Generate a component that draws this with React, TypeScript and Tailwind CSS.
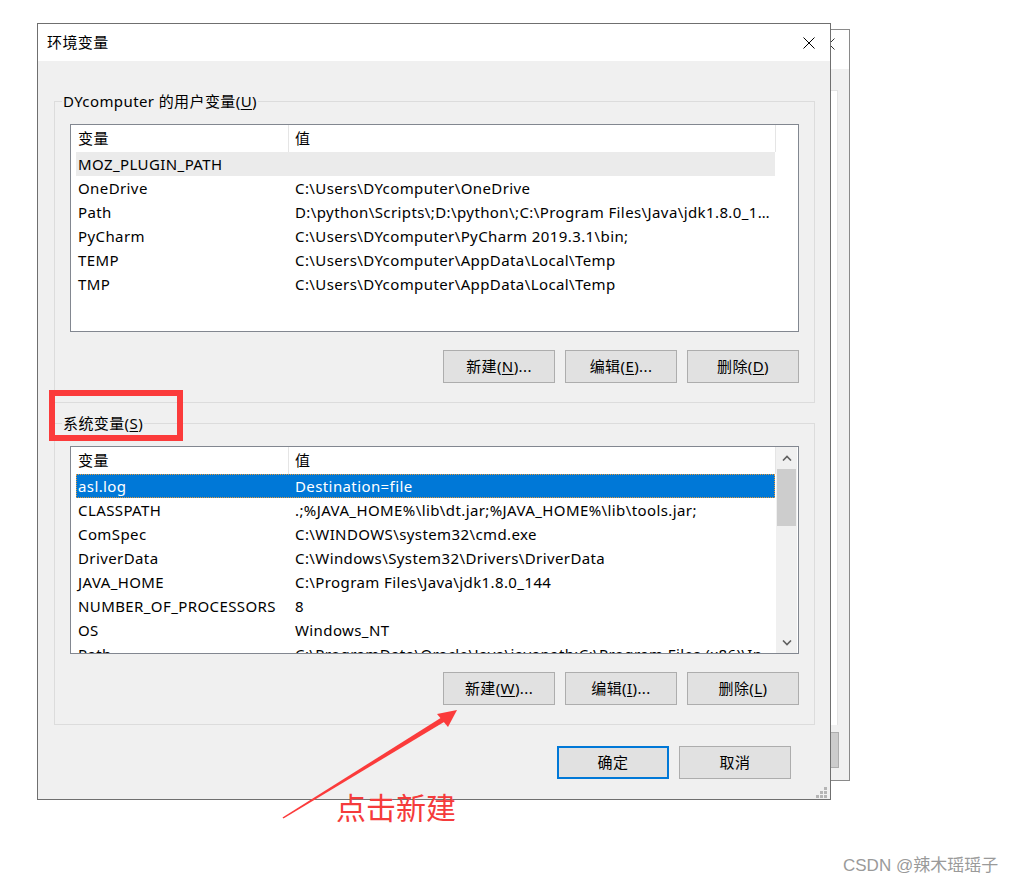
import React from 'react'

const USER_VARS = [
  ['MOZ_PLUGIN_PATH', ''],
  ['OneDrive', 'C:\\Users\\DYcomputer\\OneDrive'],
  ['Path', 'D:\\python\\Scripts\\;D:\\python\\;C:\\Program Files\\Java\\jdk1.8.0_144\\bin;C:\\Program Files\\Java\\jdk1.8.0_144\\jre\\bin;'],
  ['PyCharm', 'C:\\Users\\DYcomputer\\PyCharm 2019.3.1\\bin;'],
  ['TEMP', 'C:\\Users\\DYcomputer\\AppData\\Local\\Temp'],
  ['TMP', 'C:\\Users\\DYcomputer\\AppData\\Local\\Temp'],
]

const SYS_VARS = [
  ['asl.log', 'Destination=file'],
  ['CLASSPATH', '.;%JAVA_HOME%\\lib\\dt.jar;%JAVA_HOME%\\lib\\tools.jar;'],
  ['ComSpec', 'C:\\WINDOWS\\system32\\cmd.exe'],
  ['DriverData', 'C:\\Windows\\System32\\Drivers\\DriverData'],
  ['JAVA_HOME', 'C:\\Program Files\\Java\\jdk1.8.0_144'],
  ['NUMBER_OF_PROCESSORS', '8'],
  ['OS', 'Windows_NT'],
  ['Path', 'C:\\ProgramData\\Oracle\\Java\\javapath;C:\\Program Files (x86)\\Intel\\iCLS Client\\;'],
]

function Chevron({ up }: { up?: boolean }) {
  return (
    <svg width="10" height="6" viewBox="0 0 10 6">
      <path d={up ? 'M1 5.5 L5 1.5 L9 5.5' : 'M1 0.5 L5 4.5 L9 0.5'} fill="none" stroke="#606060" strokeWidth="1.6" />
    </svg>
  )
}

function Btn({ pre, mn, post, primary }: { pre: string; mn?: string; post?: string; primary?: boolean }) {
  return (
    <div
      className={
        primary
          ? 'w-[112px] h-[33px] flex items-center justify-center bg-[#e1e1e1] border-2 border-[#0078d7] text-[15px] text-black'
          : 'w-[112px] h-[33px] flex items-center justify-center bg-[#e1e1e1] border border-[#adadad] text-[15px] text-black'
      }
    >
      <span>
        {pre}
        {mn && <u className="underline-offset-2">{mn}</u>}
        {post}
      </span>
    </div>
  )
}

function ListBox({ rows, selected, inactive, scroll }: { rows: string[][]; selected?: number; inactive?: number; scroll?: boolean }) {
  return (
    <div className="h-[208px] border border-[#828790] bg-white flex overflow-hidden">
      <div className="w-[705px] shrink-0 flex flex-col overflow-hidden">
        <div className="h-[27px] shrink-0 flex text-[15px]">
          <div className="w-[217px] pl-[7px] flex items-center">变量</div>
          <div className="w-px bg-[#e5e5e5]" />
          <div className="w-[486px] pl-[6px] flex items-center">值</div>
          <div className="w-px bg-[#e5e5e5]" />
        </div>
        {rows.map(([name, value], i) => (
          <div
            key={name}
            className={
              i === selected
                ? 'ml-[5px] w-[699px] h-[24px] shrink-0 flex items-center text-[15px] leading-[20px] pb-px bg-[#0078d7] text-white outline-1 outline-dotted outline-[#e59a3a] -outline-offset-1'
                : i === inactive
                ? 'ml-[5px] w-[699px] h-[24px] shrink-0 flex items-center text-[15px] leading-[20px] pb-px bg-[#ebebeb] text-black'
                : 'ml-[5px] w-[699px] h-[24px] shrink-0 flex items-center text-[15px] leading-[20px] pb-px text-black'
            }
          >
            <div className="w-[212px] pl-[2px] whitespace-nowrap overflow-hidden">{name}</div>
            <div className="w-[487px] pl-[7px] whitespace-nowrap overflow-hidden text-ellipsis">{value}</div>
          </div>
        ))}
      </div>
      {scroll && (
        <div className="w-[21px] bg-[#f0f0f0] flex flex-col">
          <div className="h-[22px] flex items-center justify-center">
            <Chevron up />
          </div>
          <div className="h-[57px] mx-px bg-[#cdcdcd]" />
          <div className="flex-1" />
          <div className="h-[21px] flex items-center justify-center">
            <Chevron />
          </div>
        </div>
      )}
    </div>
  )
}

function GroupBox({ label, mn, className, children }: { label: string; mn: string; className?: string; children: React.ReactNode }) {
  return (
    <div className={'relative border border-[#dcdcdc] px-[15px] pt-[22px] pb-[19px] ' + (className || '')}>
      <span className="absolute left-[7px] -top-[11px] px-[1px] bg-[#f0f0f0] text-[15px] leading-[20px] text-black">
        {label}(<u className="underline-offset-2">{mn}</u>)
      </span>
      {children}
    </div>
  )
}

export default function App() {
  return (
    <div className="relative w-[1028px] h-[887px] bg-white overflow-hidden font-['Noto_Sans','Noto_Sans_CJK_SC',sans-serif] tracking-[0.4px] text-black">
      {/* window behind */}
      <div className="absolute left-[780px] top-[29px] w-[70px] h-[752px] border border-[#8a8a8a] bg-[#f0f0f0] flex flex-col">
        <div className="h-[39px] bg-white relative">
          <svg className="absolute left-[42px] top-[8px]" width="12" height="12" viewBox="0 0 12 12">
            <path d="M0.5 0.5 L11.5 11.5 M11.5 0.5 L0.5 11.5" stroke="#333" strokeWidth="1" />
          </svg>
        </div>
        <div className="flex-1 flex flex-col items-end pt-[21px] pr-[11px]">
          <div className="w-[50px] h-[635px] bg-white border-r border-t border-[#e3e3e3]" />
          <div className="mt-[7px] mr-[-1px] w-[50px] h-[36px] bg-[#cccccc] border border-[#adadad]" />
        </div>
      </div>

      {/* main dialog */}
      <div className="absolute left-[37px] top-[23px] w-[794px] h-[777px] border border-[#6f6f6f] bg-[#f0f0f0] flex flex-col">
        <div className="h-[37px] shrink-0 bg-white flex items-center justify-between pl-[9px] pr-[15px]">
          <span className="text-[15px]">环境变量</span>
          <svg width="12" height="12" viewBox="0 0 12 12">
            <path d="M0.5 0.5 L11.5 11.5 M11.5 0.5 L0.5 11.5" stroke="#000" strokeWidth="1" />
          </svg>
        </div>
        <div className="flex-1 pl-[16px] pr-[15px] pt-[40px] flex flex-col">
          <GroupBox label="DYcomputer 的用户变量" mn="U">
            <ListBox rows={USER_VARS} inactive={0} />
            <div className="mt-[18px] flex justify-end gap-[10px]">
              <Btn pre="新建(" mn="N" post=")..." />
              <Btn pre="编辑(" mn="E" post=")..." />
              <Btn pre="删除(" mn="D" post=")" />
            </div>
          </GroupBox>
          <GroupBox label="系统变量" mn="S" className="mt-[20px]">
            <ListBox rows={SYS_VARS} selected={0} scroll />
            <div className="mt-[18px] flex justify-end gap-[10px]">
              <Btn pre="新建(" mn="W" post=")..." />
              <Btn pre="编辑(" mn="I" post=")..." />
              <Btn pre="删除(" mn="L" post=")" />
            </div>
          </GroupBox>
          <div className="mt-[21px] mr-[24px] flex justify-end gap-[10px]">
            <Btn pre="确定" primary />
            <Btn pre="取消" />
          </div>
        </div>
        <svg className="absolute right-[3px] bottom-[1px]" width="11" height="11" viewBox="0 0 11 11">
          <rect x="8" y="0" width="3" height="3" fill="#b5b5b5" />
          <rect x="4" y="4" width="3" height="3" fill="#b5b5b5" />
          <rect x="8" y="4" width="3" height="3" fill="#b5b5b5" />
          <rect x="0" y="8" width="3" height="3" fill="#b5b5b5" />
          <rect x="4" y="8" width="3" height="3" fill="#b5b5b5" />
          <rect x="8" y="8" width="3" height="3" fill="#b5b5b5" />
        </svg>
      </div>

      {/* annotations */}
      <div className="absolute left-[49px] top-[390px] w-[134px] h-[51px] border-[6px] border-[#fb3b3b]" />
      <svg className="absolute left-0 top-0 pointer-events-none" width="1028" height="887" viewBox="0 0 1028 887">
        <polygon points="282.5,817.5 283.5,818.5 446.5,720.5 443.8,716" fill="#fb3b3b" />
        <polygon points="457,710 437,714 448,727" fill="#fb3b3b" />
      </svg>
      <span className="absolute left-[336px] top-[791px] text-[30px] leading-[30px] tracking-normal text-[#f53b3b] font-['Noto_Sans_CJK_SC',sans-serif]">
        点击新建
      </span>
      <span className="absolute left-[843px] top-[855px] text-[17px] leading-[22px] tracking-normal text-[#9a9a9a] font-['Liberation_Sans','Noto_Sans_CJK_SC',sans-serif]">
        CSDN @辣木瑶瑶子
      </span>
    </div>
  )
}
